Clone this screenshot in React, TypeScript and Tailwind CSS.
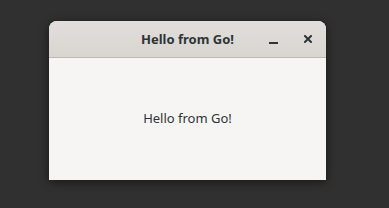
import React from 'react';

export default function App() {
  return (
    <div className="w-[389px] h-[208px] bg-[#303030] pt-[21px] pl-[49px]" style={{ fontFamily: '"Noto Sans", "Open Sans", sans-serif' }}>
      <div className="w-[277px] h-[159px] flex flex-col rounded-t-[8px] overflow-hidden shadow-[0_2px_10px_rgba(0,0,0,0.55)] bg-[#f6f5f4]">
        {/* title bar */}
        <div className="relative h-[37px] shrink-0 flex items-center justify-center bg-gradient-to-b from-[#e1dedb] to-[#d9d5d1] border-b border-[#bfb8b1]">
          <span className="text-[13px] font-bold text-[#2e3436] leading-none">Hello from Go!</span>
          <div className="absolute right-[14px] top-0 h-full flex items-center gap-[26px]">
            <svg width="9" height="14" viewBox="0 0 9 14">
              <rect x="0" y="10" width="9" height="2" fill="#2e3436" />
            </svg>
            <svg width="8" height="8" viewBox="0 0 8 8">
              <path d="M1 1 L7 7 M7 1 L1 7" stroke="#2e3436" strokeWidth="2" strokeLinecap="square" />
            </svg>
          </div>
        </div>
        {/* content */}
        <div className="flex-1 flex items-center justify-center">
          <span className="text-[13px] text-[#2e3436]">Hello from Go!</span>
        </div>
      </div>
    </div>
  );
}
